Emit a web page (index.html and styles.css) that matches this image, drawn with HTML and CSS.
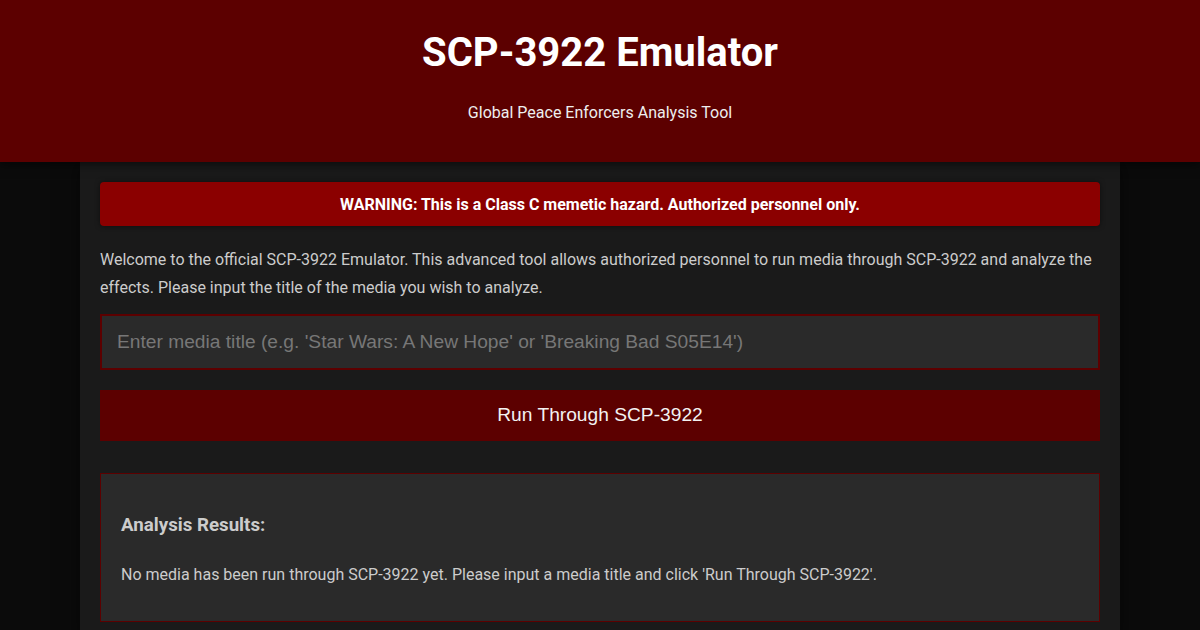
FILE: index.html
```html
<!DOCTYPE html>
<html lang="en">

<head>
    <meta charset="UTF-8">
    <meta name="viewport" content="width=device-width, initial-scale=1.0">
    <title>SCP-3922 Emulator</title>
    <link rel="stylesheet" href="styles.css">
</head>

<body>
    <header class="site-header">
        <h1>SCP-3922 Emulator</h1>
        <p>Global Peace Enforcers Analysis Tool</p>
    </header>

    <div class="container">
        <div class="warning">WARNING: This is a Class C memetic hazard. Authorized personnel only.</div>
        <p class="intro">Welcome to the official SCP-3922 Emulator. This advanced tool allows authorized personnel to run
            media through SCP-3922 and analyze the effects. Please input the title of the media you wish to analyze.</p>

        <input type="text" id="media-title"
            placeholder="Enter media title (e.g. 'Star Wars: A New Hope' or 'Breaking Bad S05E14')">
        <button id="run-button">Run Through SCP-3922</button>

        <div class="results" id="results">
            <h3>Analysis Results:</h3>
            <p>No media has been run through SCP-3922 yet. Please input a media title and click 'Run Through SCP-3922'.</p>
        </div>
    </div>
</body>

</html>
```

FILE: styles.css
```css
body {
    margin: 0;
    font-family: Roboto, "Liberation Sans", sans-serif;
    line-height: 1.7;
    background-color: #0b0b0b;
    color: #cccccc;
}

.site-header {
    background-color: #5c0000;
    color: #ffffff;
    text-align: center;
    padding: 20px;
    box-shadow: 0 2px 10px rgba(0, 0, 0, 0.6);
    position: relative;
}

.site-header h1 {
    font-size: 2.5em;
    margin: 0;
    line-height: 1.2;
    padding-top: 9px;
}

.site-header p {
    margin: 22px 0 16px;
    color: #eeeeee;
}

.container {
    max-width: 1000px;
    margin: 0 auto;
    padding: 20px;
    background-color: #1a1a1a;
    box-shadow: 0 0 20px rgba(0, 0, 0, 0.5);
}

.warning {
    background-color: #8b0000;
    color: #ffffff;
    font-weight: bold;
    text-align: center;
    padding: 8.5px;
    border-radius: 4px;
    margin-bottom: 20px;
    box-shadow: 0 0 5px rgba(0, 0, 0, 0.5);
}

.intro {
    margin: 0 0 13px;
}

input[type="text"] {
    display: block;
    width: 100%;
    box-sizing: border-box;
    padding: 15px;
    margin-bottom: 20px;
    font-size: 1.2em;
    font-family: "Liberation Sans", Arial, sans-serif;
    background-color: #2a2a2a;
    color: #dddddd;
    border: 2px solid #5c0000;
}

input[type="text"]::placeholder {
    color: #777777;
}

button#run-button {
    display: block;
    width: 100%;
    padding: 14.5px 15px;
    font-size: 1.2em;
    font-family: "Liberation Sans", Arial, sans-serif;
    background-color: #5c0000;
    color: #f2f2f2;
    border: none;
    cursor: pointer;
}

.results {
    margin-top: 32px;
    padding: 18px 20px 17px;
    background-color: #2a2a2a;
    border: 1px solid #5c0000;
}

.results h3 {
    font-size: 1.17em;
}
```
